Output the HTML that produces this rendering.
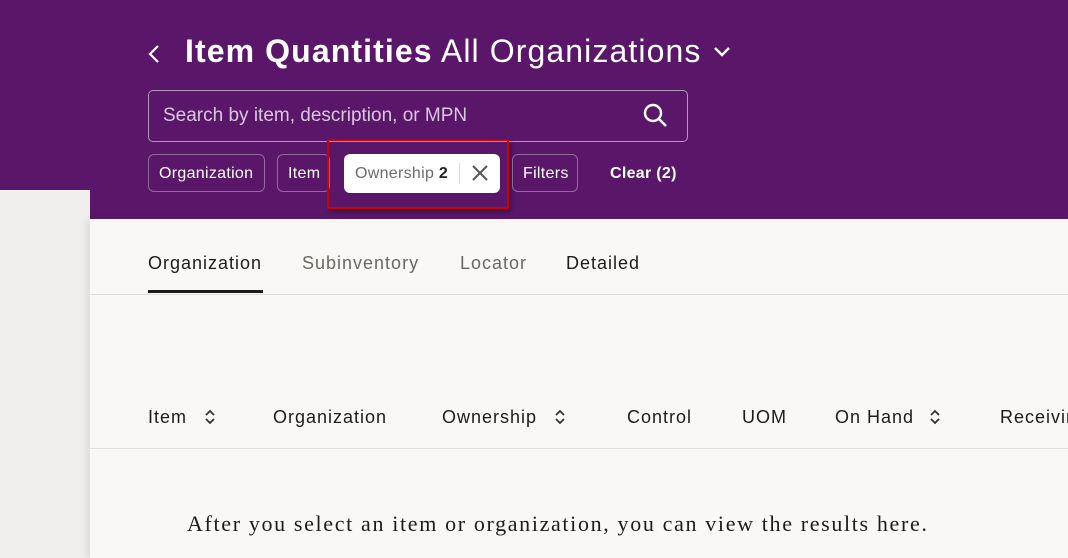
<!DOCTYPE html>
<html><head><style>
*{margin:0;padding:0;box-sizing:border-box}
body{width:1068px;height:558px;overflow:hidden;background:#f0efee;font-family:"Liberation Sans",sans-serif;position:relative}
.top{position:absolute;left:0;top:0;width:1068px;height:190px;background:#5a176a}
.top2{position:absolute;left:90px;top:190px;width:978px;height:29px;background:#5a176a}
.panel{position:absolute;left:90px;top:219px;width:978px;height:339px;background:#f9f8f6;box-shadow:-4px 0 8px rgba(0,0,0,.08)}
.abs{position:absolute;white-space:nowrap}
.title{left:185px;top:33px;font-size:32px;color:#fff;letter-spacing:1.1px}
.search{left:148px;top:90px;width:540px;height:52px;border:1px solid rgba(255,255,255,.55);border-radius:5px}
.chip{position:absolute;top:154px;height:38px;border:1px solid rgba(255,255,255,.35);border-radius:6px;color:#fff;font-size:16px;line-height:38px;padding:0 10px;letter-spacing:0.3px}
.tab{top:253px;font-size:18px;letter-spacing:1px}
.th{top:407px;font-size:18px;color:#1e1c1a;letter-spacing:1px}
</style></head><body>
<div class="top"></div><div class="top2"></div>
<div class="panel"></div>
<svg class="abs" style="left:147px;top:44px" width="14" height="20"><path d="M11 2 L3 10 L11 18" stroke="#fff" stroke-width="2.2" fill="none"/></svg>
<div class="abs title"><b>Item Quantities</b> All Organizations</div>
<svg class="abs" style="left:713px;top:46px" width="18" height="12"><path d="M2 2 L9 9 L16 2" stroke="#fff" stroke-width="2.4" fill="none"/></svg>
<div class="abs search"></div>
<div class="abs" style="left:163px;top:105px;font-size:19px;color:#d8c8dc">Search by item, description, or MPN</div>
<svg class="abs" style="left:642px;top:102px" width="28" height="28"><circle cx="11" cy="11" r="8" stroke="#fff" stroke-width="2.4" fill="none"/><path d="M17 17 L24 24" stroke="#fff" stroke-width="2.6"/></svg>
<div class="chip" style="left:148px;width:117px">Organization</div>
<div class="chip" style="left:277px;width:53px">Item</div>
<div class="abs" style="left:327px;top:139px;width:182px;height:70px;border:2px solid #c00;box-shadow:2px 3px 4px rgba(0,0,0,.35)"></div>
<div class="abs" style="left:344px;top:154px;width:156px;height:39px;background:#fff;border-radius:6px;font-size:16px;line-height:39px;padding-left:11px;color:#6b6b6b;letter-spacing:0.3px">Ownership <b style="color:#222">2</b></div>
<div class="abs" style="left:459px;top:163px;width:1px;height:21px;background:#ddd"></div>
<svg class="abs" style="left:471px;top:164px" width="18" height="18"><path d="M2 2 L16 16 M16 2 L2 16" stroke="#555" stroke-width="2"/></svg>
<div class="chip" style="left:512px;width:66px">Filters</div>
<div class="abs" style="left:610px;top:165px;font-size:16px;color:#fff;font-weight:bold;letter-spacing:0.3px">Clear (2)</div>
<div class="abs tab" style="left:148px;color:#1e1c1a">Organization</div>
<div class="abs" style="left:148px;top:290px;width:115px;height:3px;background:#1e1c1a"></div>
<div class="abs tab" style="left:302px;color:#6b6764">Subinventory</div>
<div class="abs tab" style="left:460px;color:#6b6764">Locator</div>
<div class="abs tab" style="left:566px;color:#1e1c1a">Detailed</div>
<div class="abs" style="left:90px;top:294px;width:978px;height:1px;background:#e0dedb"></div>
<div class="abs th" style="left:148px">Item</div>
<div class="abs th" style="left:273px">Organization</div>
<div class="abs th" style="left:442px">Ownership</div>
<div class="abs th" style="left:627px">Control</div>
<div class="abs th" style="left:742px">UOM</div>
<div class="abs th" style="left:835px">On Hand</div>
<div class="abs th" style="left:1000px">Receiving</div>
<svg class="abs" style="left:203px;top:408px" width="14" height="18"><path d="M3 7 L7 3 L11 7 M3 11 L7 15 L11 11" stroke="#333" stroke-width="1.8" fill="none"/></svg>
<svg class="abs" style="left:553px;top:408px" width="14" height="18"><path d="M3 7 L7 3 L11 7 M3 11 L7 15 L11 11" stroke="#333" stroke-width="1.8" fill="none"/></svg>
<svg class="abs" style="left:928px;top:408px" width="14" height="18"><path d="M3 7 L7 3 L11 7 M3 11 L7 15 L11 11" stroke="#333" stroke-width="1.8" fill="none"/></svg>
<div class="abs" style="left:90px;top:448px;width:978px;height:1px;background:#e0dedb"></div>
<div class="abs" style="left:187px;top:511px;font-family:'Liberation Serif',serif;font-size:22px;color:#1e1c1a;letter-spacing:1.65px">After you select an item or organization, you can view the results here.</div>
</body></html>
